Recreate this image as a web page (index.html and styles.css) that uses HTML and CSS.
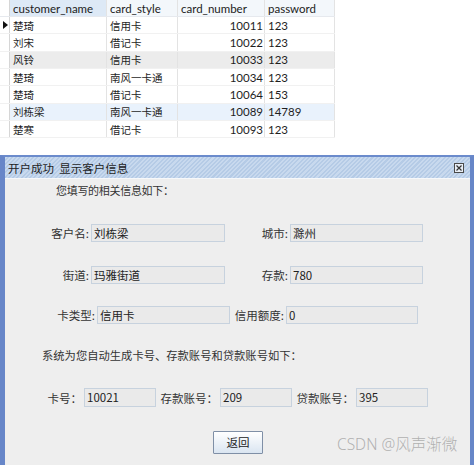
FILE: index.html
```html
<!DOCTYPE html>
<html lang="zh">
<head>
<meta charset="utf-8">
<title>开户成功 显示客户信息</title>
<link rel="stylesheet" href="styles.css">
</head>
<body>
<div class="top">
  <table class="grid">
    <thead>
      <tr>
        <th class="gutter"></th>
        <th class="c-name sorted">customer_name</th>
        <th class="c-style">card_style</th>
        <th class="c-num">card_number</th>
        <th class="c-pwd">password</th>
      </tr>
    </thead>
    <tbody>
      <tr><td class="gutter"><span class="arrow"></span></td><td>楚琦</td><td>信用卡</td><td class="num">10011</td><td>123</td></tr>
      <tr><td class="gutter"></td><td>刘宋</td><td>借记卡</td><td class="num">10022</td><td>123</td></tr>
      <tr class="grey"><td class="gutter"></td><td>风铃</td><td>信用卡</td><td class="num">10033</td><td>123</td></tr>
      <tr><td class="gutter"></td><td>楚琦</td><td>南风一卡通</td><td class="num">10034</td><td>123</td></tr>
      <tr><td class="gutter"></td><td>楚琦</td><td>借记卡</td><td class="num">10064</td><td>153</td></tr>
      <tr class="blue"><td class="gutter"></td><td>刘栋梁</td><td>南风一卡通</td><td class="num">10089</td><td>14789</td></tr>
      <tr><td class="gutter"></td><td>楚寒</td><td>借记卡</td><td class="num">10093</td><td>123</td></tr>
    </tbody>
  </table>
</div>

<div class="dialog">
  <div class="titlebar">
    <span class="title">开户成功&nbsp;&nbsp;显示客户信息</span>
    <svg class="close" width="10" height="10" viewBox="0 0 10 10">
      <rect x="0.5" y="0.5" width="9" height="9" fill="#e8eef6" stroke="#4a4a4a"/>
      <path d="M2.5 2.5 L7.5 7.5 M7.5 2.5 L2.5 7.5" stroke="#333" stroke-width="1.2"/>
    </svg>
  </div>
  <div class="content">
    <div class="heading">您填写的相关信息如下：</div>

    <div class="row r1">
      <span class="lbl w84">客户名:</span><span class="field w134">刘栋梁</span>
      <span class="lbl w63">城市:</span><span class="field w133">滁州</span>
    </div>
    <div class="row r2">
      <span class="lbl w84">街道:</span><span class="field w134">玛雅街道</span>
      <span class="lbl w63">存款:</span><span class="field w133">780</span>
    </div>
    <div class="row r3">
      <span class="lbl w90">卡类型:</span><span class="field w133">信用卡</span>
      <span class="lbl w54">信用额度:</span><span class="field w132">0</span>
    </div>

    <div class="para">系统为您自动生成卡号、存款账号和贷款账号如下：</div>

    <div class="row r4">
      <span class="lbl w77">卡号：</span><span class="field w72">10021</span>
      <span class="lbl w62">存款账号：</span><span class="field w72">209</span>
      <span class="lbl w62">贷款账号：</span><span class="field w72">395</span>
    </div>

    <div class="btnrow"><button class="btn">返回</button></div>
  </div>
  <div class="watermark">CSDN @风声渐微</div>
</div>
</body>
</html>
```
FILE: styles.css
```css
html, body {
  margin: 0;
  padding: 0;
  background: #ffffff;
  width: 474px;
  height: 465px;
  overflow: hidden;
  font-family: Lato, "Noto Sans CJK SC", sans-serif;
}

.top {
  height: 155px;
  background: #ffffff;
}

.grid {
  border-collapse: collapse;
  table-layout: fixed;
  font-size: 11.5px;
  color: #1e1e1e;
}

.grid th,
.grid td {
  padding: 0 0 0 3px;
  text-align: left;
  white-space: nowrap;
  overflow: hidden;
  border-right: 1px solid #e3e3e3;
  border-bottom: 1px solid #f1f1f1;
  line-height: 15px;
}

.grid th {
  height: 16px;
  font-weight: normal;
  background: #f3f7fb;
  border-bottom: 1px solid #e6e9ee;
  color: #222;
}

.grid th.sorted {
  background: #dde9f6;
}

.grid td {
  height: 16.33px;
  font-family: "Noto Sans CJK SC", sans-serif;
  font-size: 10.5px;
}

.grid td.num,
.grid td:last-child {
  font-family: Lato, sans-serif;
  font-size: 11.5px;
}

.grid td.num {
  text-align: right;
  padding: 0 1px 0 0;
}

.grid .gutter {
  width: 9px;
  padding: 0;
  background: #ffffff;
  border-right: 1px solid #d6d6d6;
}

.grid th.gutter { background: #ffffff; }

.c-name { width: 93px; }
.c-style { width: 67px; }
.c-num { width: 83px; }
.c-pwd { width: 66px; }

.grid tr.grey td { background: #ececec; }
.grid tr.blue td { background: #e9f2fc; }
.grid tr.grey td.gutter,
.grid tr.blue td.gutter { background: #ffffff; }

.arrow {
  display: block;
  width: 0;
  height: 0;
  margin-left: 3px;
  border-top: 4px solid transparent;
  border-bottom: 4px solid transparent;
  border-left: 5px solid #111;
}

/* dialog */
.dialog {
  position: relative;
  height: 320px;
  border-top: 2px solid #6b8bcc;
  border-left: 5px solid #6786c8;
  border-right: 4px solid #6786c8;
  background: #eeeeee;
  font-family: "Noto Sans CJK SC", sans-serif;
  color: #333333;
}

.titlebar {
  height: 21px;
  display: flex;
  align-items: center;
  justify-content: space-between;
  padding: 0 6px 0 3px;
  background: repeating-linear-gradient(135deg, #c8d9ee 0 1.5px, #b5cbe6 1.5px 3px);
  border-bottom: 1px solid #f6f8fb;
}

.title {
  font-size: 11.5px;
  color: #1e1e1e;
}

.close {
  display: block;
}

.heading {
  margin: 4px 0 0 51px;
  font-size: 11px;
  line-height: 14px;
  letter-spacing: -0.3px;
}

.row {
  display: flex;
  align-items: center;
  font-size: 11.5px;
}

.r1 { margin-top: 27px; }
.r2 { margin-top: 24px; }
.r3 { margin-top: 22px; }
.r4 { margin-top: 26px; }

.lbl {
  text-align: right;
  margin-right: 2px;
  white-space: nowrap;
  line-height: 18px;
}

.field {
  box-sizing: border-box;
  height: 18px;
  line-height: 16px;
  padding-left: 2px;
  background: #eaeaea;
  border: 1px solid #c7d2de;
  color: #222;
  font-size: 11.5px;
  white-space: nowrap;
}

.r4 .field { height: 19px; line-height: 17px; }

.w84 { width: 84px; }
.w90 { width: 90px; }
.w77 { width: 77px; }
.w63 { width: 63px; }
.w62 { width: 62px; }
.w54 { width: 54px; }
.w134 { width: 134px; }
.w133 { width: 133px; }
.w132 { width: 132px; }
.w72 { width: 72px; }

.para {
  margin: 24px 0 0 37px;
  font-size: 11.3px;
  line-height: 14px;
}

.btnrow {
  margin: 21px 0 0 208px;
}

.btn {
  box-sizing: border-box;
  width: 50px;
  height: 23px;
  padding: 0;
  font-family: "Noto Sans CJK SC", sans-serif;
  font-size: 11.5px;
  color: #222;
  border: 1px solid #7f8fa6;
  border-radius: 1px;
  background: linear-gradient(#ffffff, #dae5f1);
}

.watermark {
  position: absolute;
  left: 332px;
  top: 275px;
  font-family: "Noto Sans", "Noto Sans CJK SC", sans-serif;
  font-size: 15.5px;
  font-weight: 300;
  color: rgba(160, 160, 160, 0.8);
  white-space: nowrap;
}
```
